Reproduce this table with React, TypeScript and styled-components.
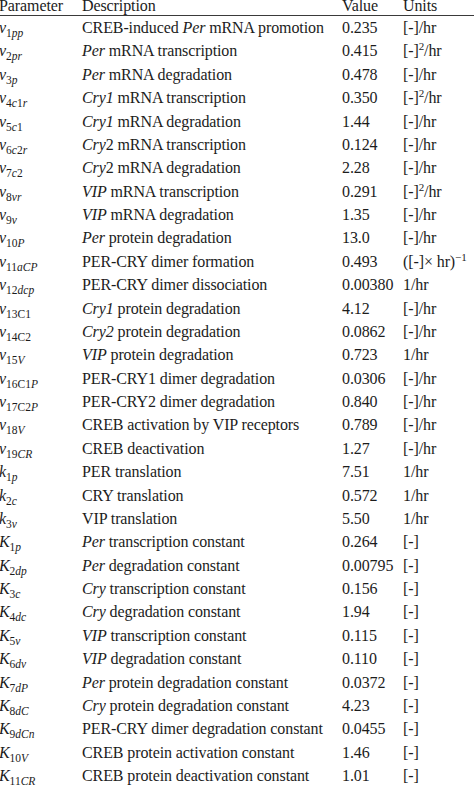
import React from "react";
import styled, { createGlobalStyle } from "styled-components";

const Global = createGlobalStyle`
  html, body { margin: 0; padding: 0; background: #ffffff; }
  body { overflow: hidden; }
`;

const Page = styled.div`
  width: 474px;
  height: 787px;
  overflow: hidden;
  font-family: "Liberation Serif", "DejaVu Serif", serif;
  font-size: 16px;
  letter-spacing: -0.1px;
  color: #1c1c1c;
`;

const Table = styled.div`
  margin-left: -1px;
  display: grid;
  grid-template-columns: 83px 260px 61px 1fr;
`;

const HeadCell = styled.div`
  line-height: 16px;
  margin-top: -2px;
  padding-bottom: 1px;
  border-bottom: 1px solid #3a3a3a;
  white-space: nowrap;
`;

const Cell = styled.div`
  line-height: 23.38px;
  height: 23.38px;
  white-space: nowrap;
`;

const Sym = styled.span`
  font-style: italic;
`;

const Sub = styled.sub`
  font-size: 11.5px;
  letter-spacing: 0;
  vertical-align: -4px;
  line-height: 0;
`;

const SubIt = styled.span<{ $up?: boolean }>`
  font-style: ${(p) => (p.$up ? "normal" : "italic")};
`;

const Em = styled.span`
  font-style: italic;
`;

const Sup = styled.sup`
  font-size: 11px;
  vertical-align: 6px;
  line-height: 0;
`;

type Row = {
  sym: string;
  sub: string;
  desc: string;
  value: string;
  unit: "a" | "b" | "c" | "d" | "e";
};

const rows: Row[] = [
  { sym: "v", sub: "1pp", desc: "CREB-induced *Per* mRNA promotion", value: "0.235", unit: "a" },
  { sym: "v", sub: "2pr", desc: "*Per* mRNA transcription", value: "0.415", unit: "b" },
  { sym: "v", sub: "3p", desc: "*Per* mRNA degradation", value: "0.478", unit: "a" },
  { sym: "v", sub: "4c1r", desc: "*Cry1* mRNA transcription", value: "0.350", unit: "b" },
  { sym: "v", sub: "5c1", desc: "*Cry1* mRNA degradation", value: "1.44", unit: "a" },
  { sym: "v", sub: "6c2r", desc: "*Cry*2 mRNA transcription", value: "0.124", unit: "a" },
  { sym: "v", sub: "7c2", desc: "*Cry*2 mRNA degradation", value: "2.28", unit: "a" },
  { sym: "v", sub: "8vr", desc: "*VIP* mRNA transcription", value: "0.291", unit: "b" },
  { sym: "v", sub: "9v", desc: "*VIP* mRNA degradation", value: "1.35", unit: "a" },
  { sym: "v", sub: "10P", desc: "*Per* protein degradation", value: "13.0", unit: "a" },
  { sym: "v", sub: "11aCP", desc: "PER-CRY dimer formation", value: "0.493", unit: "e" },
  { sym: "v", sub: "12dcp", desc: "PER-CRY dimer dissociation", value: "0.00380", unit: "c" },
  { sym: "v", sub: "13^C1", desc: "*Cry1* protein degradation", value: "4.12", unit: "a" },
  { sym: "v", sub: "14^C2", desc: "*Cry2* protein degradation", value: "0.0862", unit: "a" },
  { sym: "v", sub: "15V", desc: "*VIP* protein degradation", value: "0.723", unit: "c" },
  { sym: "v", sub: "16^C1P", desc: "PER-CRY1 dimer degradation", value: "0.0306", unit: "a" },
  { sym: "v", sub: "17^C2P", desc: "PER-CRY2 dimer degradation", value: "0.840", unit: "a" },
  { sym: "v", sub: "18V", desc: "CREB activation by VIP receptors", value: "0.789", unit: "a" },
  { sym: "v", sub: "19CR", desc: "CREB deactivation", value: "1.27", unit: "a" },
  { sym: "k", sub: "1p", desc: "PER translation", value: "7.51", unit: "c" },
  { sym: "k", sub: "2c", desc: "CRY translation", value: "0.572", unit: "c" },
  { sym: "k", sub: "3v", desc: "VIP translation", value: "5.50", unit: "c" },
  { sym: "K", sub: "1p", desc: "*Per* transcription constant", value: "0.264", unit: "d" },
  { sym: "K", sub: "2dp", desc: "*Per* degradation constant", value: "0.00795", unit: "d" },
  { sym: "K", sub: "3c", desc: "*Cry* transcription constant", value: "0.156", unit: "d" },
  { sym: "K", sub: "4dc", desc: "*Cry* degradation constant", value: "1.94", unit: "d" },
  { sym: "K", sub: "5v", desc: "*VIP* transcription constant", value: "0.115", unit: "d" },
  { sym: "K", sub: "6dv", desc: "*VIP* degradation constant", value: "0.110", unit: "d" },
  { sym: "K", sub: "7dP", desc: "*Per* protein degradation constant", value: "0.0372", unit: "d" },
  { sym: "K", sub: "8dC", desc: "*Cry* protein degradation constant", value: "4.23", unit: "d" },
  { sym: "K", sub: "9dCn", desc: "PER-CRY dimer degradation constant", value: "0.0455", unit: "d" },
  { sym: "K", sub: "10V", desc: "CREB protein activation constant", value: "1.46", unit: "d" },
  { sym: "K", sub: "11CR", desc: "CREB protein deactivation constant", value: "1.01", unit: "d" },
];

function renderSub(s: string) {
  const out: React.ReactNode[] = [];
  let up = false;
  let i = 0;
  for (const ch of s) {
    if (ch === "^") {
      up = true;
      continue;
    }
    const letter = /[a-zA-Z]/.test(ch);
    out.push(
      <SubIt key={i++} $up={!letter || (up && ch === "C")}>
        {ch}
      </SubIt>
    );
  }
  return out;
}

function renderDesc(d: string) {
  const parts = d.split("*");
  return parts.map((p, i) => (i % 2 === 1 ? <Em key={i}>{p}</Em> : <React.Fragment key={i}>{p}</React.Fragment>));
}

function renderUnit(u: Row["unit"]) {
  switch (u) {
    case "a":
      return <>[-]/hr</>;
    case "b":
      return (
        <>
          [-]<Sup>2</Sup>/hr
        </>
      );
    case "c":
      return <>1/hr</>;
    case "d":
      return <>[-]</>;
    case "e":
      return (
        <>
          ([-]× hr)<Sup>−1</Sup>
        </>
      );
  }
}

export default function App() {
  return (
    <Page>
      <Global />
      <Table>
        <HeadCell>Parameter</HeadCell>
        <HeadCell>Description</HeadCell>
        <HeadCell>Value</HeadCell>
        <HeadCell>Units</HeadCell>
        {rows.map((r, idx) => (
          <React.Fragment key={idx}>
            <Cell>
              <Sym>{r.sym}</Sym>
              <Sub>{renderSub(r.sub)}</Sub>
            </Cell>
            <Cell>{renderDesc(r.desc)}</Cell>
            <Cell>{r.value}</Cell>
            <Cell>{renderUnit(r.unit)}</Cell>
          </React.Fragment>
        ))}
      </Table>
    </Page>
  );
}
